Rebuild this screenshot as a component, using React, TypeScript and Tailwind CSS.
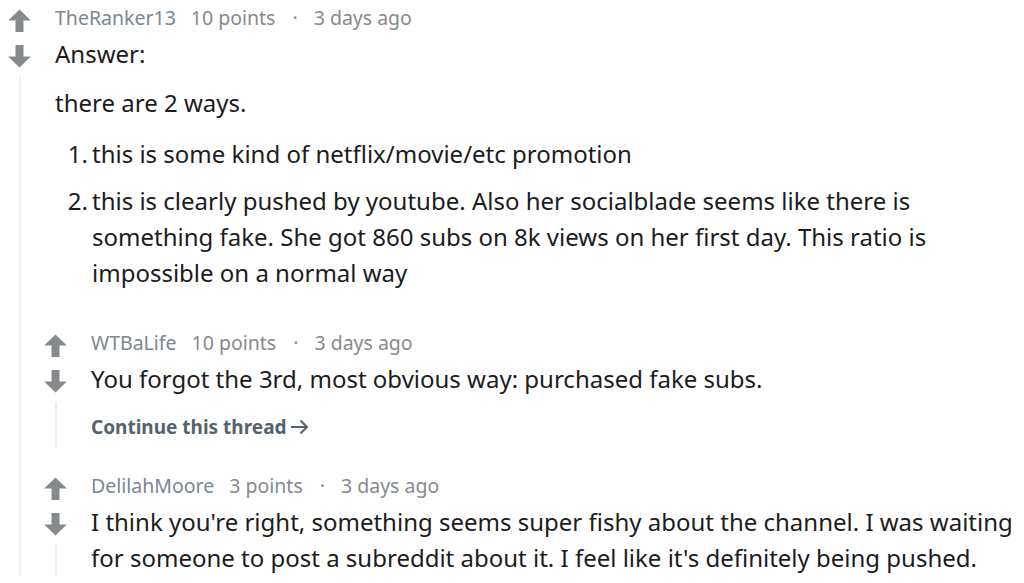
import type { ReactNode } from "react";

function Arrow({ down }: { down?: boolean }) {
  return (
    <svg
      width="23"
      height="23"
      viewBox="0 0 23 23"
      className={down ? "block rotate-180" : "block"}
    >
      <path d="M11.5 0.5 L22.8 11.5 H15.5 V23 H7.5 V11.5 H0.2 Z" fill="#878a8c" />
    </svg>
  );
}

interface CommentProps {
  author: string;
  points: string;
  time: string;
  children: ReactNode;
  replies?: ReactNode;
  className?: string;
}

function Comment({ author, points, time, children, replies, className }: CommentProps) {
  return (
    <div className={"flex " + (className ?? "")}>
      {/* стрелки и линия ветки */}
      <div className="flex w-[36px] shrink-0 flex-col">
        <div className="ml-[8px] mt-[9px]">
          <Arrow />
        </div>
        <div className="ml-[8px] mt-[13px]">
          <Arrow down />
        </div>
        <div className="ml-[19px] mt-[9px] w-[2px] flex-1 bg-[#edeff1]" />
      </div>

      <div className="min-w-0 flex-1">
        <div className="pl-[19px]">
          <div className="flex h-[36px] items-center text-[19.5px] text-[#878a8c]">
            <span className="text-[#7a8792]">{author}</span>
            <span className="ml-[15px]">{points}</span>
            <span className="ml-[17px] mr-[16px]">·</span>
            <span>{time}</span>
          </div>
          {children}
        </div>
        {replies}
      </div>
    </div>
  );
}

export default function App() {
  return (
    <div className="h-[583px] w-[1024px] overflow-hidden bg-white font-['Noto_Sans',sans-serif] text-[24px] leading-[36px] text-[#1c1c1c]">
      <Comment
        author="TheRanker13"
        points="10 points"
        time="3 days ago"
        replies={
          <div className="mt-[34px]">
            <Comment author="WTBaLife" points="10 points" time="3 days ago">
              <p>You forgot the 3rd, most obvious way: purchased fake subs.</p>
              <div className="mt-[13px] flex h-[36px] items-center pb-[2px] text-[19px] font-bold text-[#53636f]">
                Continue this thread
                <svg width="19" height="16" viewBox="0 0 19 16" className="ml-[3px]">
                  <path
                    d="M1 8 H17 M10.5 1.5 L17 8 L10.5 14.5"
                    fill="none"
                    stroke="#53636f"
                    strokeWidth="2"
                  />
                </svg>
              </div>
              <div className="h-[2px]" />
            </Comment>
            <Comment
              className="mt-[20px]"
              author="DelilahMoore"
              points="3 points"
              time="3 days ago"
            >
              <p>
                I think you're right, something seems super fishy about the channel. I was waiting
                for someone to post a subreddit about it. I feel like it's definitely being pushed.
              </p>
            </Comment>
          </div>
        }
      >
        <p>Answer:</p>
        <p className="mt-[13px]">there are 2 ways.</p>
        <ol className="mt-[15px]">
          <li className="flex">
            <span className="w-[37px] shrink-0 pr-[4px] text-right">1.</span>
            <span>this is some kind of netflix/movie/etc promotion</span>
          </li>
          <li className="mt-[11px] flex">
            <span className="w-[37px] shrink-0 pr-[4px] text-right">2.</span>
            <span>
              this is clearly pushed by youtube. Also her socialblade seems like there is
              something fake. She got 860 subs on 8k views on her first day. This ratio is
              impossible on a normal way
            </span>
          </li>
        </ol>
      </Comment>
    </div>
  );
}
